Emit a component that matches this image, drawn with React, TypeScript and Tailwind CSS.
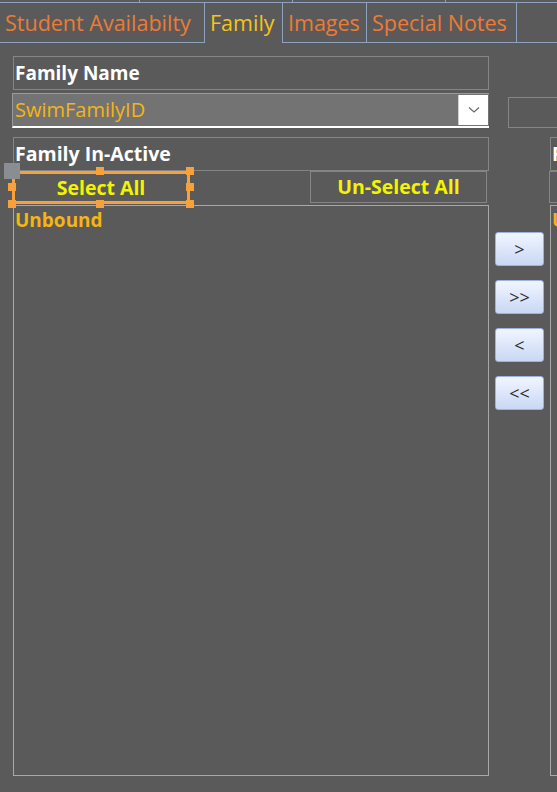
import type { ReactNode } from "react";

const font = { fontFamily: '"Open Sans", "Noto Sans", "Liberation Sans", sans-serif' };

const tabs = [
  { label: "Student Availabilty", width: "w-[205px]", active: false },
  { label: "Family", width: "w-[78px]", active: true },
  { label: "Images", width: "w-[84px]", active: false },
  { label: "Special Notes", width: "w-[150px]", active: false },
];

function Handle({ className }: { className: string }) {
  return <span className={`absolute h-[8px] w-[8px] bg-[#f7a13c] ${className}`} />;
}

function MoveButton({ children }: { children: ReactNode }) {
  return (
    <button
      type="button"
      className="flex h-[34px] w-[49px] items-center justify-center rounded-[3px] border border-[#9db2dc] bg-gradient-to-b from-[#f1f5fe] to-[#c9d8f6] text-[18px] text-[#2b2b2b]"
    >
      {children}
    </button>
  );
}

export default function App() {
  return (
    <div className="h-[792px] w-[557px] overflow-hidden bg-[#5a5a5a]" style={font}>
      {/* tab strip */}
      <div className="relative h-[2px]">
        <span className="absolute left-[139px] top-0 h-[2px] w-px bg-[#8ea2bf]" />
        <span className="absolute left-[292px] top-0 h-[2px] w-px bg-[#8ea2bf]" />
        <span className="absolute left-[445px] top-0 h-[2px] w-px bg-[#8ea2bf]" />
      </div>
      <div className="flex h-[41px] border-t border-[#8ea2bf]">
        {tabs.map((tab) => (
          <div
            key={tab.label}
            className={`flex shrink-0 items-center overflow-hidden whitespace-nowrap border-r border-[#8ea2bf] pl-[5px] text-[21.5px] leading-none ${tab.width} ${
              tab.active ? "text-[#f7c21a]" : "border-b text-[#ee7a35]"
            }`}
          >
            {tab.label}
          </div>
        ))}
        <div className="flex-1 border-b border-[#8ea2bf]" />
      </div>

      <div className="flex">
        {/* left column */}
        <div className="ml-[12px] flex w-[477px] shrink-0 flex-col">
          <div className="mt-[13px] ml-px flex h-[34px] items-center border border-[#858585] pl-[1px] text-[19px] font-bold text-white">
            Family Name
          </div>
          <div className="mt-[3px] flex h-[35px] border-t border-l border-[#9a9a9a] border-b-2 border-b-white bg-[#737373]">
            <div className="flex flex-1 items-center pl-[2px] text-[20px] text-[#f5b512]">SwimFamilyID</div>
            <div className="my-[1px] mr-[1px] flex w-[30px] items-center justify-center border-l border-[#cfcfcf] bg-white">
              <svg width="12" height="8" viewBox="0 0 12 8">
                <path d="M1 1.5 L6 6 L11 1.5" fill="none" stroke="#6b6b6b" strokeWidth="1.2" />
              </svg>
            </div>
          </div>
          <div className="mt-[9px] ml-px flex h-[34px] items-center border border-[#858585] pl-[1px] text-[19.5px] font-bold text-white">
            Family In-Active
          </div>
          <div className="flex h-[34px] justify-between">
            <div className="relative h-[33px] w-[178px]">
              <div className="flex h-full w-full items-center justify-center border-[3px] border-[#f7a13c] text-[19.5px] font-bold text-[#f4f400]">
                Select All
              </div>
              <span className="absolute -top-[8px] -left-[8px] h-[16px] w-[16px] bg-[#8a8d92]" />
              <Handle className="-top-[4px] left-[84px]" />
              <Handle className="-top-[4px] -right-[4px]" />
              <Handle className="top-[12px] -left-[4px]" />
              <Handle className="top-[12px] -right-[4px]" />
              <Handle className="-bottom-[4px] -left-[4px]" />
              <Handle className="-bottom-[4px] left-[84px]" />
              <Handle className="-bottom-[4px] -right-[4px]" />
            </div>
            <div className="mr-[2px] flex h-[32px] w-[177px] items-center justify-center border border-[#858585] text-[19.5px] font-bold text-[#f4f400]">
              Un-Select All
            </div>
          </div>
          <div className="ml-px h-[571px] border border-[#a8a8a8] px-[1px] text-[19px] leading-[28px] font-bold text-[#f5b512]">
            Unbound
          </div>
        </div>

        {/* right area */}
        <div className="flex flex-1 flex-col">
          <div className="mt-[54px] ml-[19px] h-[31px] border border-r-0 border-[#858585]" />
          <div className="mt-[9px] flex">
            <div className="ml-[6px] flex w-[49px] shrink-0 flex-col gap-[14px] pt-[95px]">
              <MoveButton>&gt;</MoveButton>
              <MoveButton>&gt;&gt;</MoveButton>
              <MoveButton>&lt;</MoveButton>
              <MoveButton>&lt;&lt;</MoveButton>
            </div>
            <div className="ml-[5px] flex flex-1 flex-col">
              <div className="ml-px flex h-[34px] items-center border border-r-0 border-[#858585] pl-[1px] text-[19px] font-bold text-white">
                F
              </div>
              <div className="h-[32px] border border-r-0 border-[#858585]" />
              <div className="mt-[2px] ml-px h-[571px] border border-r-0 border-[#a8a8a8] px-[1px] text-[19px] leading-[28px] font-bold text-[#f5b512]">
                U
              </div>
            </div>
          </div>
        </div>
      </div>
    </div>
  );
}
